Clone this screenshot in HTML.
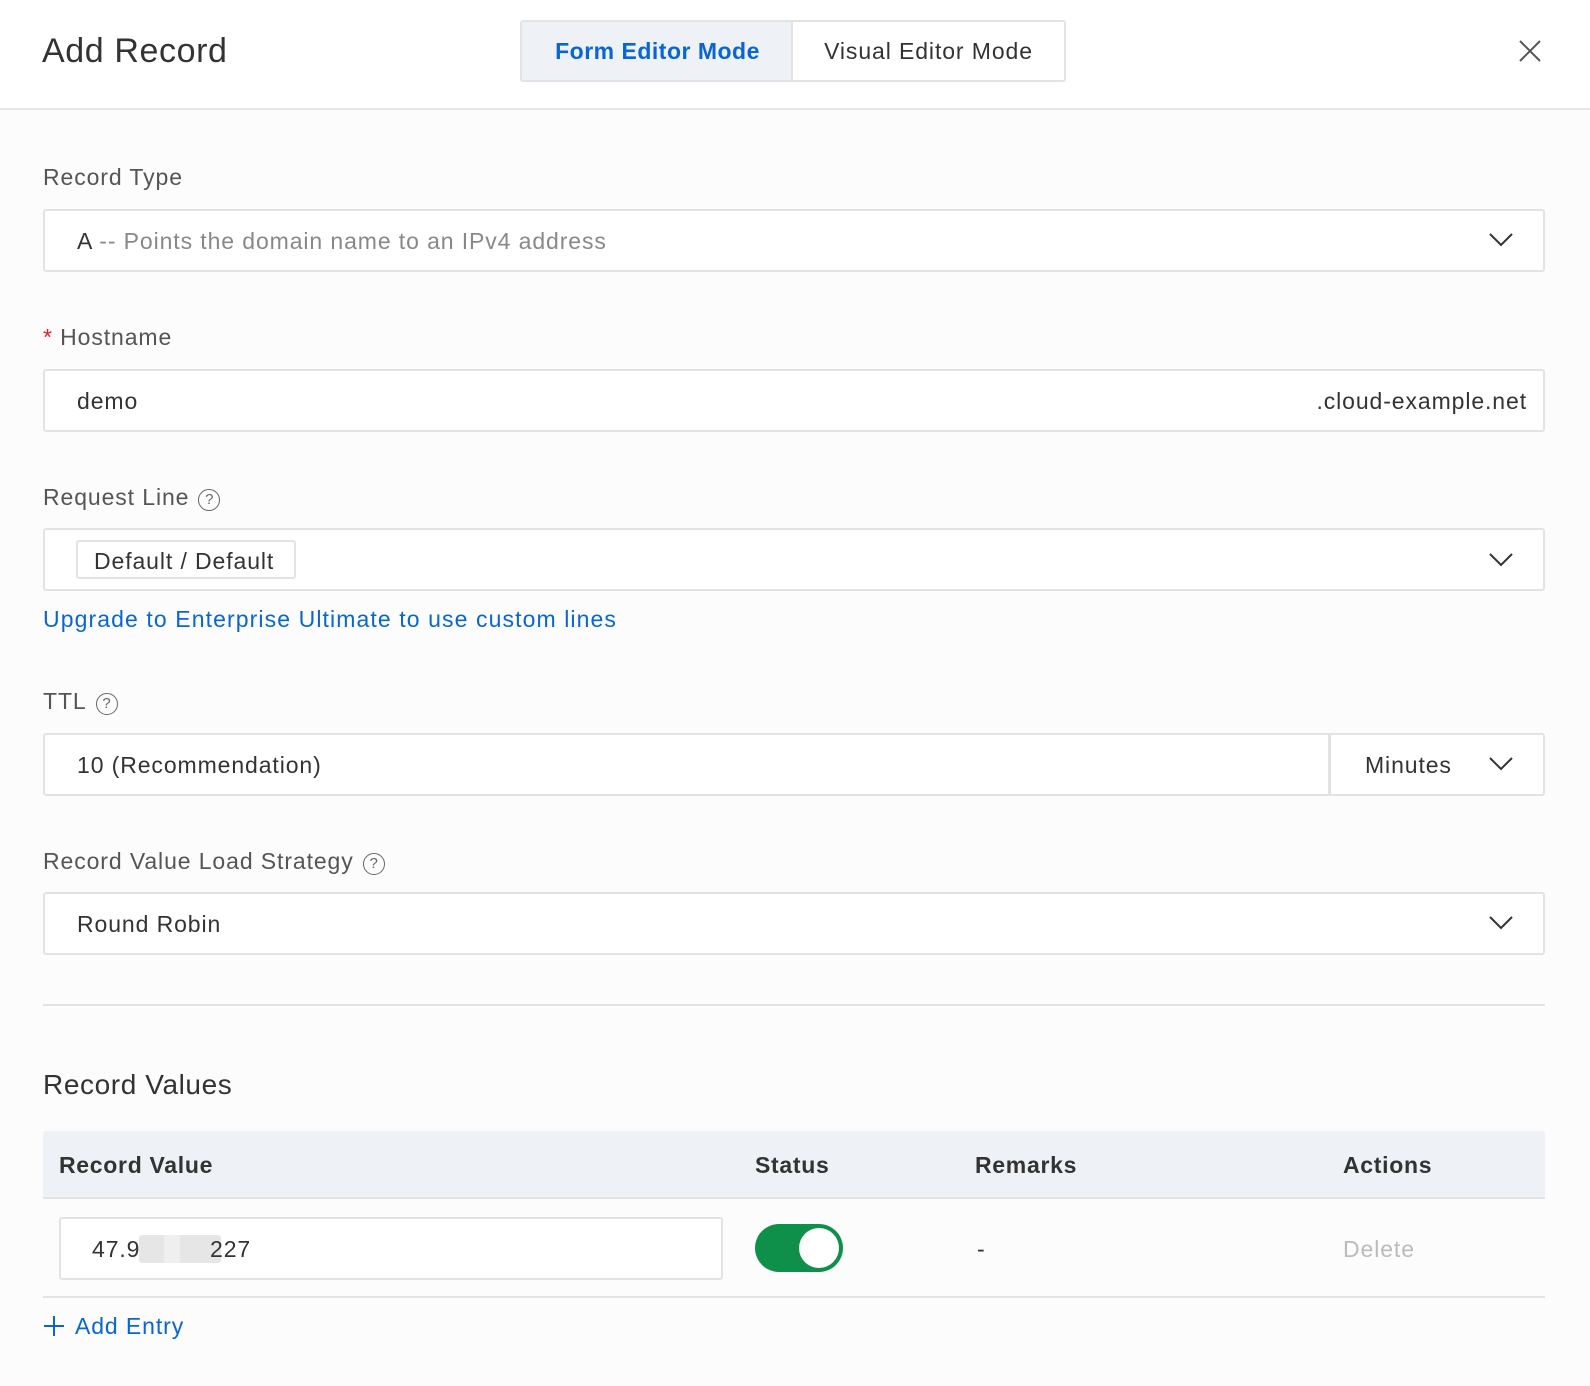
<!DOCTYPE html>
<html><head><meta charset="utf-8"><style>
*{margin:0;padding:0;box-sizing:border-box}
body{width:1590px;height:1386px;background:#fcfcfc;font-family:"Liberation Sans",Arial,sans-serif;color:#333;position:relative;overflow:hidden}
.a{position:absolute}
.lbl{position:absolute;left:43px;font-size:23px;color:#555;line-height:28px;letter-spacing:0.9px}
.box{position:absolute;left:43px;width:1502px;height:63px;border:2px solid #e3e3e3;border-radius:3px;background:#fff}
.txt{position:absolute;font-size:23px;line-height:28px;color:#333;letter-spacing:0.9px}
.chev{position:absolute;width:24px;height:14px}
.q{display:inline-block;width:22px;height:22px;border:1.6px solid #666;border-radius:50%;font-size:15px;line-height:19px;text-align:center;color:#666;vertical-align:1px;margin-left:9px;letter-spacing:0}
</style></head><body>
<div class="a" style="left:0;top:0;width:1590px;height:110px;background:#fff;border-bottom:2px solid #e4e4e4"></div>
<div class="txt" style="left:42px;top:32px;font-size:34px;line-height:38px;color:#333;letter-spacing:0.6px">Add Record</div>
<div class="a" style="left:520px;top:20px;width:546px;height:62px;border:2px solid #e3e3e3;border-radius:3px;background:#fff;overflow:hidden">
 <div class="a" style="left:0;top:0;width:271px;height:58px;background:#eef1f6;border-right:2px solid #e3e3e3"></div>
 <div class="txt" style="left:0;width:271px;top:15px;text-align:center;color:#0866d4;font-weight:bold;letter-spacing:0.5px">Form Editor Mode</div>
 <div class="txt" style="left:271px;width:271px;top:15px;text-align:center;color:#333">Visual Editor Mode</div>
</div>
<svg class="a" style="left:1519px;top:40px" width="22" height="22" viewBox="0 0 22 22"><path d="M1 1L21 21M21 1L1 21" stroke="#555" stroke-width="2"/></svg>

<div class="lbl" style="top:163px">Record Type</div>
<div class="box" style="top:209px"></div>
<div class="txt" style="left:77px;top:227px">A <span style="color:#888">-- Points the domain name to an IPv4 address</span></div>
<svg class="chev" style="left:1489px;top:233px" viewBox="0 0 24 14"><path d="M1 1L12 12L23 1" fill="none" stroke="#333" stroke-width="2"/></svg>

<div class="lbl" style="top:323px;color:#555"><span style="color:#e02020">*</span> Hostname</div>
<div class="box" style="top:369px"></div>
<div class="txt" style="left:77px;top:387px">demo</div>
<div class="txt" style="left:0;width:1527px;top:387px;text-align:right">.cloud-example.net</div>

<div class="lbl" style="top:483px">Request Line<span class="q">?</span></div>
<div class="box" style="top:528px"></div>
<div class="a" style="left:76px;top:540px;width:220px;height:39px;border:2px solid #e3e3e3;border-radius:3px;background:#fff"></div>
<div class="txt" style="left:94px;top:547px">Default / Default</div>
<svg class="chev" style="left:1489px;top:553px" viewBox="0 0 24 14"><path d="M1 1L12 12L23 1" fill="none" stroke="#333" stroke-width="2"/></svg>
<div class="txt" style="left:43px;top:605px;color:#0866d4;letter-spacing:1.1px">Upgrade to Enterprise Ultimate to use custom lines</div>

<div class="lbl" style="top:687px">TTL<span class="q">?</span></div>
<div class="box" style="top:733px"></div>
<div class="a" style="left:1328px;top:733px;width:3px;height:63px;background:#e3e3e3"></div>
<div class="txt" style="left:77px;top:751px">10 (Recommendation)</div>
<div class="txt" style="left:1365px;top:751px">Minutes</div>
<svg class="chev" style="left:1489px;top:757px" viewBox="0 0 24 14"><path d="M1 1L12 12L23 1" fill="none" stroke="#333" stroke-width="2"/></svg>

<div class="lbl" style="top:847px">Record Value Load Strategy<span class="q">?</span></div>
<div class="box" style="top:892px"></div>
<div class="txt" style="left:77px;top:910px">Round Robin</div>
<svg class="chev" style="left:1489px;top:916px" viewBox="0 0 24 14"><path d="M1 1L12 12L23 1" fill="none" stroke="#333" stroke-width="2"/></svg>

<div class="a" style="left:43px;top:1004px;width:1502px;height:2px;background:#e3e3e3"></div>
<div class="txt" style="left:43px;top:1069px;font-size:28px;line-height:32px;color:#333;letter-spacing:0.6px">Record Values</div>

<div class="a" style="left:43px;top:1131px;width:1502px;height:68px;background:#eef1f6;border-bottom:2px solid #e3e3e3;border-radius:3px 3px 0 0"></div>
<div class="txt" style="left:59px;top:1151px;font-weight:bold;letter-spacing:0.7px">Record Value</div>
<div class="txt" style="left:755px;top:1151px;font-weight:bold;letter-spacing:0.7px">Status</div>
<div class="txt" style="left:975px;top:1151px;font-weight:bold;letter-spacing:0.7px">Remarks</div>
<div class="txt" style="left:1343px;top:1151px;font-weight:bold;letter-spacing:0.7px">Actions</div>

<div class="a" style="left:59px;top:1217px;width:664px;height:63px;border:2px solid #e3e3e3;border-radius:3px;background:#fff"></div>
<div class="txt" style="left:92px;top:1235px">47.9</div>
<div class="a" style="left:139px;top:1235px;width:82px;height:28px;background:#e6e6e6;border-radius:3px"></div>
<div class="a" style="left:164px;top:1235px;width:16px;height:28px;background:#efefef"></div>
<div class="txt" style="left:210px;top:1235px">227</div>
<div class="a" style="left:755px;top:1224px;width:88px;height:48px;border-radius:24px;background:#0f904a"></div>
<div class="a" style="left:799px;top:1228px;width:40px;height:40px;border-radius:50%;background:#fff"></div>
<div class="txt" style="left:977px;top:1235px">-</div>
<div class="txt" style="left:1343px;top:1235px;color:#bbb">Delete</div>
<div class="a" style="left:43px;top:1296px;width:1502px;height:2px;background:#e3e3e3"></div>

<svg class="a" style="left:44px;top:1316px" width="20" height="20" viewBox="0 0 20 20"><path d="M10 0V20M0 10H20" stroke="#0866d4" stroke-width="2"/></svg>
<div class="txt" style="left:75px;top:1312px;color:#0866d4">Add Entry</div>
</body></html>
